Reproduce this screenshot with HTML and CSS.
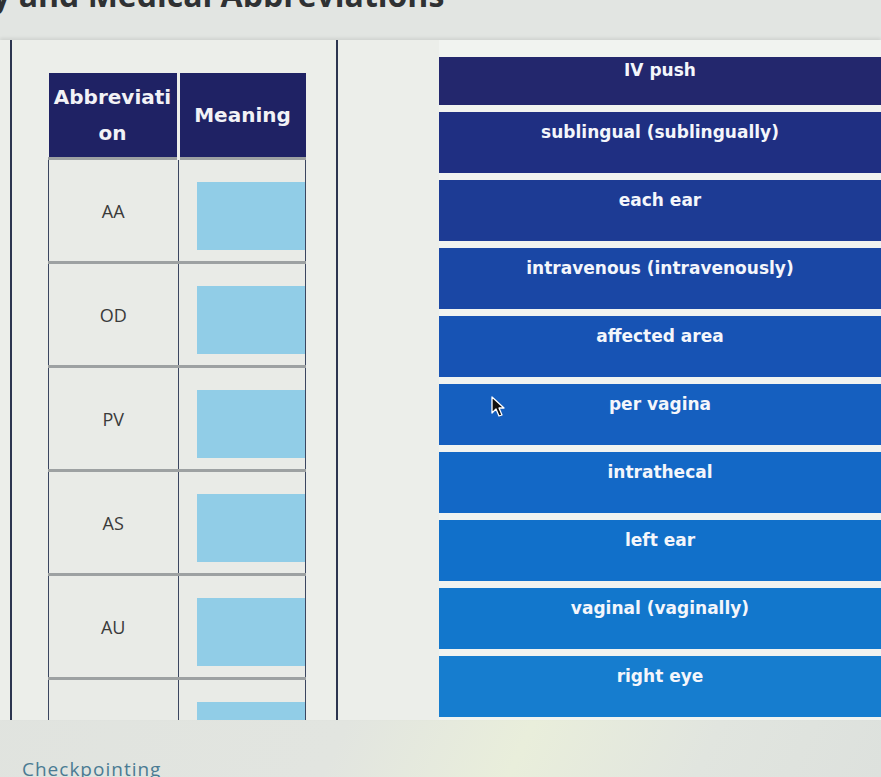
FILE: index.html
```html
<!DOCTYPE html>
<html lang="en">
<head>
    <meta charset="UTF-8">
    <meta name="viewport" content="width=device-width, initial-scale=1.0">
    <title>Pharmacy and Medical Abbreviations</title>
    <link rel="stylesheet" href="styles.css">
</head>
<body>
    <div class="title-strip">
        <h1>Pharmacy and Medical Abbreviations</h1>
    </div>

    <div class="workspace">
        <div class="abbr-list">
            <table class="abbr-table">
                <thead>
                    <tr>
                        <th class="col-abbr">Abbreviation</th>
                        <th class="col-meaning">Meaning</th>
                    </tr>
                </thead>
                <tbody>
                    <tr><td class="abbr">AA</td><td class="drop"><div class="drop-slot"></div></td></tr>
                    <tr><td class="abbr">OD</td><td class="drop"><div class="drop-slot"></div></td></tr>
                    <tr><td class="abbr">PV</td><td class="drop"><div class="drop-slot"></div></td></tr>
                    <tr><td class="abbr">AS</td><td class="drop"><div class="drop-slot"></div></td></tr>
                    <tr><td class="abbr">AU</td><td class="drop"><div class="drop-slot"></div></td></tr>
                    <tr><td class="abbr">CL</td><td class="drop"><div class="drop-slot"></div></td></tr>
                </tbody>
            </table>
        </div>

        <div class="meanings">
            <div class="meaning m1">IV push</div>
            <div class="meaning m2">sublingual (sublingually)</div>
            <div class="meaning m3">each ear</div>
            <div class="meaning m4">intravenous (intravenously)</div>
            <div class="meaning m5">affected area</div>
            <div class="meaning m6">
                per vagina
                <svg class="pointer" width="16" height="22" viewBox="0 0 16 22">
                    <path d="M1 1 L1 17 L5 13 L8 20 L11 19 L8 12 L13 12 Z" fill="#111" stroke="#fff" stroke-width="1.3" stroke-linejoin="round"/>
                </svg>
            </div>
            <div class="meaning m7">intrathecal</div>
            <div class="meaning m8">left ear</div>
            <div class="meaning m9">vaginal (vaginally)</div>
            <div class="meaning m10">right eye</div>
        </div>
    </div>

    <div class="status">Checkpointing</div>
</body>
</html>
```

FILE: styles.css
```css
/* Estilos gerais */
body {
    margin: 0;
    height: 777px;
    overflow: hidden;
    font-family: 'DejaVu Sans', Verdana, sans-serif;
    background: linear-gradient(115deg, #dfe2de 0%, #e2e5e0 55%, #e9eedb 70%, #e1e5df 85%, #dde1dd 100%);
    color: #333;
}

/* titulo cortado no topo */
.title-strip {
    height: 40px;
    background-color: #e2e5e2;
    overflow: hidden;
}

.title-strip h1 {
    margin: -27px 0 0 -150px;
    font-family: 'Open Sans', sans-serif;
    font-size: 32px;
    font-weight: 700;
    color: #2f3133;
    white-space: nowrap;
}

.workspace {
    display: flex;
    height: 680px;
    background-color: #eceeea;
    box-shadow: 0 -2px 3px rgba(0, 0, 0, 0.08);
}

/* coluna das siglas */
.abbr-list {
    width: 258px;
    margin-left: 10px;
    padding: 33px 30px 0 36px;
    border-left: 2px solid #2c3550;
    border-right: 2px solid #2c3550;
    overflow: hidden;
}

.abbr-table {
    width: 258px;
    border-collapse: collapse;
    table-layout: fixed;
}

.abbr-table th {
    height: 84px;
    padding: 0 2px;
    background-color: #1f2264;
    color: #f2f2f6;
    font-size: 20px;
    font-weight: 700;
    line-height: 36px;
    text-align: center;
    vertical-align: middle;
}

.abbr-table th.col-abbr {
    width: 124px;
    word-break: break-all;
    border-right: 3px solid #eceeea;
}

.abbr-table td {
    box-sizing: border-box;
    height: 104px;
    border-top: 3px solid #9da1a2;
    border-left: 1px solid #3b4660;
    border-right: 1px solid #3b4660;
    background-color: #e9ebe7;
}

.abbr-table td.abbr {
    font-family: 'Open Sans', sans-serif;
    font-size: 18px;
    color: #3a3a3a;
    text-align: center;
    vertical-align: middle;
}

.abbr-table td.drop {
    vertical-align: top;
    padding: 22px 0 0 18px;
}

.drop-slot {
    height: 68px;
    background-color: #91cde7;
}

/* lista de significados */
.meanings {
    flex: 1;
    display: flex;
    flex-direction: column;
    gap: 7px;
    margin-left: 101px;
    padding-top: 17px;
    background-color: #f1f3f0;
}

.meaning {
    position: relative;
    height: 51px;
    padding-top: 10px;
    color: #f4f6fb;
    font-size: 17px;
    font-weight: 700;
    line-height: 20px;
    text-align: center;
}

.meaning.m1 { height: 45px; padding-top: 3px; background-color: #23276d; }
.meaning.m2 { background-color: #1f2f82; }
.meaning.m3 { background-color: #1d3b94; }
.meaning.m4 { background-color: #1a47a5; }
.meaning.m5 { background-color: #1753b4; }
.meaning.m6 { background-color: #155fbf; }
.meaning.m7 { background-color: #1368c6; }
.meaning.m8 { background-color: #1170ca; }
.meaning.m9 { background-color: #1277cc; }
.meaning.m10 { background-color: #167dcf; }

/* cursor do mouse sobre a lista */
.pointer {
    position: absolute;
    left: 52px;
    top: 12px;
}

.status {
    margin-top: 36px;
    padding-left: 22px;
    font-family: 'Open Sans', sans-serif;
    font-size: 19px;
    letter-spacing: 1px;
    color: #4a7b93;
}
```
